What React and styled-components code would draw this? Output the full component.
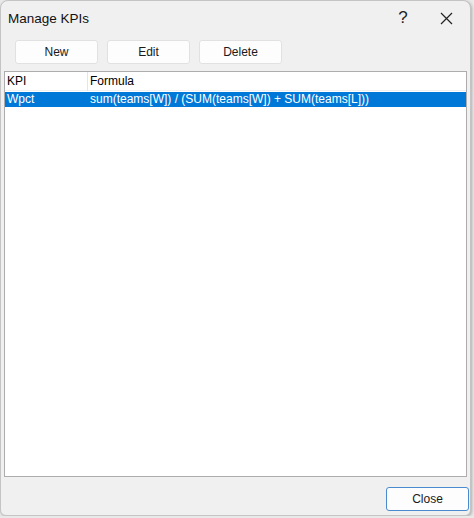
import styled, { createGlobalStyle } from "styled-components";

const GlobalStyle = createGlobalStyle`
  html, body {
    margin: 0;
    padding: 0;
    background: #e9e9e9;
  }
  body {
    font-family: "Liberation Sans", Arial, sans-serif;
    font-size: 12px;
    color: #000;
  }
`;

const Window = styled.div`
  /* dialog frame */
  box-sizing: border-box;
  width: 471px;
  height: 516px;
  display: flex;
  flex-direction: column;
  background: #f0f0f0;
  border: 1px solid #c4c4c4;
  border-radius: 8px 8px 6px 6px;
  box-shadow: 1px 1px 3px rgba(0, 0, 0, 0.25);
  overflow: hidden;
`;

const TitleBar = styled.div`
  display: flex;
  align-items: center;
  height: 34px;
  padding-left: 7px;
`;

const Title = styled.div`
  flex: 1;
  font-size: 13.5px;
  padding-top: 1px;
  color: #111;
`;

const TitleButton = styled.button`
  display: flex;
  align-items: center;
  justify-content: center;
  width: ${(p) => p.$w}px;
  height: 32px;
  padding: 0;
  border: none;
  background: transparent;
  font-family: "Liberation Sans", Arial, sans-serif;
  font-size: 17px;
  color: #222;
`;

const Toolbar = styled.div`
  display: flex;
  gap: 9px;
  padding: 5px 0 0 14px;
  height: 31px;
`;

const Button = styled.button`
  box-sizing: border-box;
  width: 83px;
  height: 24px;
  padding: 0;
  background: #fdfdfd;
  border: 1px solid ${(p) => (p.$default ? "#4a8bd0" : "#e1e1e1")};
  border-radius: 3px;
  font-family: inherit;
  font-size: 12px;
  color: #1a1a1a;
`;

const List = styled.div`
  flex: 1;
  margin: 0 3px 0 3px;
  background: #fff;
  border: 1px solid #adadad;
  display: flex;
  flex-direction: column;
`;

const HeaderRow = styled.div`
  display: grid;
  grid-template-columns: 83px 1fr;
  height: 18px;
  border-bottom: 1px solid #f0f0f0;
`;

const HeaderCell = styled.div`
  padding-left: ${(p) => p.$pad}px;
  line-height: 19px;
  border-right: ${(p) => (p.$sep ? "1px solid #e5e5e5" : "none")};
`;

const Row = styled.div`
  display: grid;
  grid-template-columns: 83px 1fr;
  height: 15px;
  margin: 1px 0 0 0;
  background: ${(p) => (p.$selected ? "#0078d7" : "transparent")};
  color: ${(p) => (p.$selected ? "#fff" : "#000")};
`;

const Cell = styled.div`
  padding-left: ${(p) => p.$pad}px;
  line-height: 15px;
  white-space: nowrap;
`;

const Footer = styled.div`
  display: flex;
  justify-content: flex-end;
  height: 38px;
  padding: 10px 1px 0 0;
  box-sizing: border-box;
`;

function CloseIcon() {
  return (
    <svg width="13" height="13" viewBox="0 0 13 13">
      <path d="M1 1 L12 12 M12 1 L1 12" stroke="#222" strokeWidth="1.2" fill="none" />
    </svg>
  );
}

const kpis = [
  { name: "Wpct", formula: "sum(teams[W]) / (SUM(teams[W]) + SUM(teams[L]))" },
];

export default function App() {
  return (
    <>
      <GlobalStyle />
      <Window>
        <TitleBar>
          <Title>Manage KPIs</Title>
          <TitleButton $w={38}>?</TitleButton>
          <TitleButton $w={48}>
            <CloseIcon />
          </TitleButton>
        </TitleBar>
        <Toolbar>
          <Button>New</Button>
          <Button>Edit</Button>
          <Button>Delete</Button>
        </Toolbar>
        <List>
          <HeaderRow>
            <HeaderCell $pad={2} $sep>KPI</HeaderCell>
            <HeaderCell $pad={2}>Formula</HeaderCell>
          </HeaderRow>
          {kpis.map((k) => (
            <Row key={k.name} $selected>
              <Cell $pad={2}>{k.name}</Cell>
              <Cell $pad={2}>{k.formula}</Cell>
            </Row>
          ))}
        </List>
        <Footer>
          <Button $default>Close</Button>
        </Footer>
      </Window>
    </>
  );
}
